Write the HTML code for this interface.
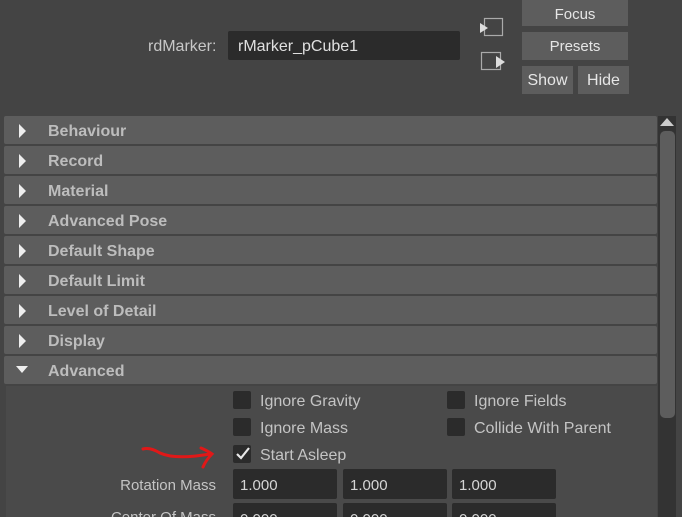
<!DOCTYPE html>
<html style="overflow:hidden;height:517px"><head><style>
body{margin:0;width:682px;height:517px;background:#444;font-family:"Liberation Sans",sans-serif;overflow:hidden;position:relative;color:#c8c8c8}
.a{position:absolute}
.btn{position:absolute;background:#5d5d5d;color:#e6e6e6;font-size:15px;text-align:center;line-height:30px}
.hdr{position:absolute;left:4px;width:653px;height:28px;background:#5d5d5d;border-radius:2px;color:#bdbdbd;font-weight:bold;font-size:16px;line-height:31px}
.hdr span{position:absolute;left:44px}
.tri{position:absolute;left:15px;top:8px;width:0;height:0;border-top:7px solid transparent;border-bottom:7px solid transparent;border-left:7px solid #eee}
.cb{position:absolute;width:18px;height:18px;background:#2b2b2b;border-radius:2px}
.lbl{position:absolute;font-size:16px;color:#c4c4c4}
.rl{position:absolute;font-size:15px;color:#c4c4c4;right:466px;text-align:right;white-space:nowrap}
.fld{position:absolute;width:104px;height:30px;background:#2b2b2b;color:#d6d6d6;font-size:15px;line-height:34px;text-indent:7px;border-radius:2px}
</style></head><body>
<div class="lbl" style="left:148px;top:38px;color:#c8c8c8">rdMarker:</div>
<div class="a" style="left:228px;top:31px;width:232px;height:29px;background:#2b2b2b;color:#e0e0e0;font-size:16px;line-height:31px;text-indent:10px;border-radius:2px">rMarker_pCube1</div>
<svg class="a" style="left:480px;top:16px" width="30" height="60">
<rect x="4.5" y="2.5" width="18" height="17" fill="none" stroke="#aaa" stroke-width="1.2"/>
<polygon points="0,7 8,12 0,17" fill="#ddd"/>
<rect x="1.5" y="36.5" width="19" height="17" fill="none" stroke="#aaa" stroke-width="1.2"/>
<polygon points="16,40 25,46 16,52" fill="#ddd"/>
</svg>
<div class="btn" style="left:522px;top:0;width:106px;height:26px;line-height:29px">Focus</div>
<div class="btn" style="left:522px;top:32px;width:106px;height:28px">Presets</div>
<div class="btn" style="left:522px;top:66px;width:51px;height:28px;font-size:16px">Show</div>
<div class="btn" style="left:578px;top:66px;width:51px;height:28px;font-size:16px">Hide</div>
<div class="a" style="left:0;top:116px;width:658px;height:270px;background:#444"></div>
<div class="hdr" style="top:116px"><i class="tri"></i><span>Behaviour</span></div>
<div class="hdr" style="top:146px"><i class="tri"></i><span>Record</span></div>
<div class="hdr" style="top:176px"><i class="tri"></i><span>Material</span></div>
<div class="hdr" style="top:206px"><i class="tri"></i><span>Advanced Pose</span></div>
<div class="hdr" style="top:236px"><i class="tri"></i><span>Default Shape</span></div>
<div class="hdr" style="top:266px"><i class="tri"></i><span>Default Limit</span></div>
<div class="hdr" style="top:296px"><i class="tri"></i><span>Level of Detail</span></div>
<div class="hdr" style="top:326px"><i class="tri"></i><span>Display</span></div>
<div class="hdr" style="top:356px"><i class="a" style="left:12px;top:10px;border-left:6px solid transparent;border-right:6px solid transparent;border-top:7px solid #eee;width:0;height:0"></i><span>Advanced</span></div>
<div class="a" style="left:6px;top:386px;width:651px;height:131px;background:#4a4a4a"></div>
<div class="a" style="left:658px;top:116px;width:18px;height:401px;background:#333"></div>
<div class="a" style="left:660px;top:131px;width:15px;height:287px;background:#5d5d5d;border-radius:5px"></div>
<div class="a" style="left:660px;top:118px;width:0;height:0;border-left:7px solid transparent;border-right:7px solid transparent;border-bottom:8px solid #ccc"></div>
<div class="cb" style="left:233px;top:391px"></div><div class="lbl" style="left:260px;top:393px">Ignore Gravity</div>
<div class="cb" style="left:447px;top:391px"></div><div class="lbl" style="left:474px;top:393px">Ignore Fields</div>
<div class="cb" style="left:233px;top:418px"></div><div class="lbl" style="left:260px;top:420px">Ignore Mass</div>
<div class="cb" style="left:447px;top:418px"></div><div class="lbl" style="left:474px;top:420px">Collide With Parent</div>
<div class="cb" style="left:233px;top:445px"></div>
<svg class="a" style="left:234px;top:445px" width="18" height="18"><path d="M3 9 L7 13 L15 3" fill="none" stroke="#e8e8e8" stroke-width="2.2"/></svg>
<div class="lbl" style="left:260px;top:447px">Start Asleep</div>
<svg class="a" style="left:140px;top:440px" width="80" height="30"><path d="M3 9 Q10 7 20 13 Q35 20 70 14 M61 8 Q68 11 72 14 Q66 20 63 27" fill="none" stroke="#e01818" stroke-width="3" stroke-linecap="round"/></svg>
<div class="rl" style="top:477px">Rotation Mass</div>
<div class="fld" style="left:233px;top:469px">1.000</div>
<div class="fld" style="left:343px;top:469px">1.000</div>
<div class="fld" style="left:452px;top:469px">1.000</div>
<div class="rl" style="top:509px">Center Of Mass</div>
<div class="fld" style="left:233px;top:503px">0.000</div>
<div class="fld" style="left:343px;top:503px">0.000</div>
<div class="fld" style="left:452px;top:503px">0.000</div>
</body></html>
